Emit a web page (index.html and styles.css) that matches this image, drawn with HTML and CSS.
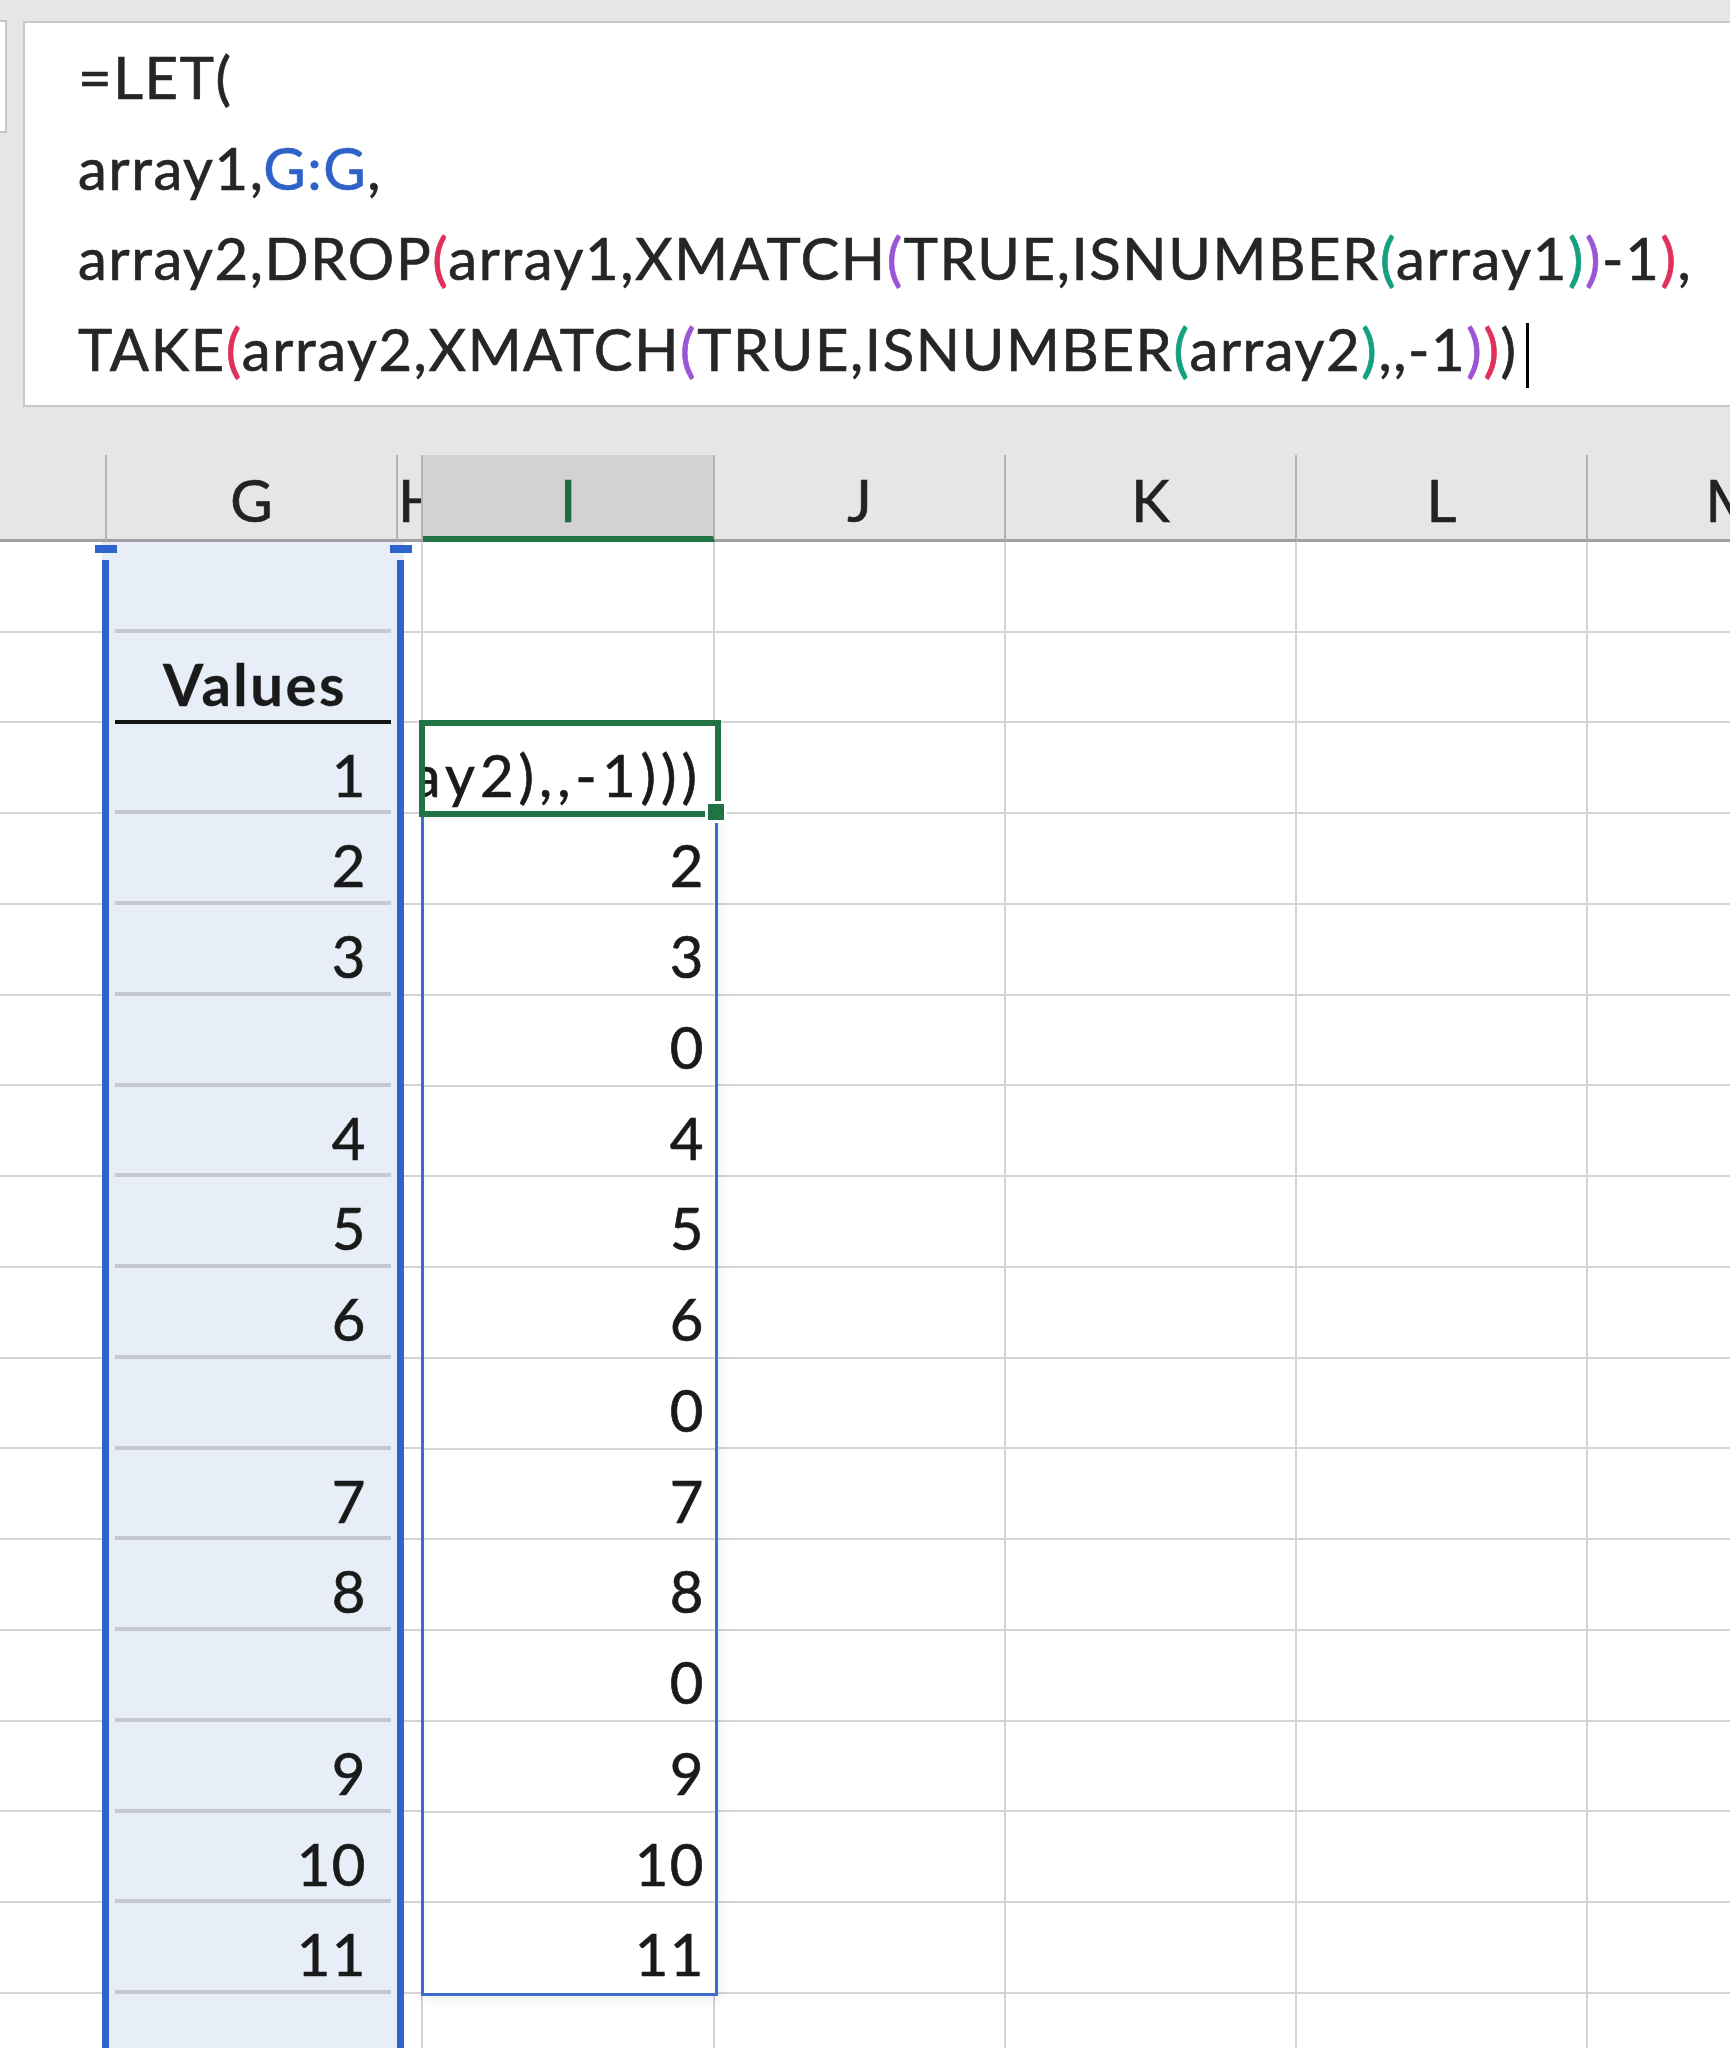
FILE: index.html
```html
<!DOCTYPE html>
<html lang="en">
<head>
<meta charset="utf-8">
<title>Excel LET formula</title>
<link rel="stylesheet" href="styles.css">
</head>
<body>
<div class="formula-row">
  <div class="namebox"></div>
  <div class="fbar">
    <div class="fline">=LET(</div>
    <div class="fline">array1,<span class="ref">G:G</span>,</div>
    <div class="fline">array2,DROP<span class="p2">(</span>array1,XMATCH<span class="p3">(</span>TRUE,ISNUMBER<span class="p4">(</span>array1<span class="p4">)</span><span class="p3">)</span>-1<span class="p2">)</span>,</div>
    <div class="fline">TAKE<span class="p2">(</span>array2,XMATCH<span class="p3">(</span>TRUE,ISNUMBER<span class="p4">(</span>array2<span class="p4">)</span>,,-1<span class="p3">)</span><span class="p2">)</span>)<span class="caret"></span></div>
  </div>
</div>

<div class="col-headers">
  <div class="ch w-f"></div>
  <div class="ch w-g">G</div>
  <div class="ch w-h">H</div>
  <div class="ch w-i sel">I</div>
  <div class="ch w-std">J</div>
  <div class="ch w-std">K</div>
  <div class="ch w-std">L</div>
  <div class="ch w-std">M</div>
</div>

<div class="grid">
  <div class="col plain col-f"></div>

  <div class="col col-g">
    <span class="handle hl"></span>
    <span class="handle hr"></span>
    <div class="gcell"></div>
    <div class="gcell head">Values</div>
    <div class="gcell">1</div>
    <div class="gcell">2</div>
    <div class="gcell">3</div>
    <div class="gcell"></div>
    <div class="gcell">4</div>
    <div class="gcell">5</div>
    <div class="gcell">6</div>
    <div class="gcell"></div>
    <div class="gcell">7</div>
    <div class="gcell">8</div>
    <div class="gcell"></div>
    <div class="gcell">9</div>
    <div class="gcell">10</div>
    <div class="gcell">11</div>
    <div class="gcell"></div>
  </div>

  <div class="col plain col-h"></div>

  <div class="col col-i">
    <div class="icell"></div>
    <div class="icell"></div>
    <div class="spill">
      <div class="icell active">
        <div class="active-text"><span>ISNUMBER(array2),,-1)))</span></div>
        <span class="active-frame"></span>
        <span class="fill-handle"></span>
      </div>
      <div class="icell">2</div>
      <div class="icell">3</div>
      <div class="icell">0</div>
      <div class="icell">4</div>
      <div class="icell">5</div>
      <div class="icell">6</div>
      <div class="icell">0</div>
      <div class="icell">7</div>
      <div class="icell">8</div>
      <div class="icell">0</div>
      <div class="icell">9</div>
      <div class="icell">10</div>
      <div class="icell">11</div>
    </div>
    <div class="icell"></div>
  </div>

  <div class="col plain col-std"></div>
  <div class="col plain col-std"></div>
  <div class="col plain col-std"></div>
  <div class="col plain col-std"></div>
</div>
</body>
</html>
```

FILE: styles.css
```css
* {
  box-sizing: border-box;
}

html,
body {
  margin: 0;
  padding: 0;
}

body {
  width: 1730px;
  height: 2048px;
  overflow: hidden;
  background: #e6e6e6;
  font-family: Lato, "Open Sans", sans-serif;
  color: #262626;
  -webkit-text-stroke: 0.7px currentColor;
}

/* ---------- formula bar ---------- */
.formula-row {
  display: flex;
  align-items: flex-start;
  padding-top: 20px;
  height: 455px;
}

.namebox {
  flex: none;
  width: 7px;
  height: 113px;
  background: #fff;
  border: 2px solid #c6c6c6;
  border-left: 0;
}

.fbar {
  flex: none;
  width: 1740px;
  margin-left: 16px;
  margin-top: 1px;
  background: #fff;
  border: 2px solid #c8c8c8;
  border-right: 0;
  padding: 9px 0 10px 53px;
  font-size: 58px;
  letter-spacing: 1.6px;
  line-height: 90.67px;
  white-space: nowrap;
  color: #262626;
}

.ref { color: #2f62c8; }
.p2 { color: #e0305c; }
.p3 { color: #9b55d6; }
.p4 { color: #15a07e; }

.caret {
  display: inline-block;
  width: 3px;
  height: 65px;
  margin-left: 8px;
  background: #000;
  vertical-align: -17px;
}

/* ---------- column headers ---------- */
.col-headers {
  display: flex;
  height: 87px;
}

.ch {
  flex: none;
  height: 87px;
  border-right: 2px solid #b3b3b3;
  border-bottom: 3px solid #a0a0a0;
  padding-top: 4px;
  text-align: center;
  font-size: 58px;
  line-height: 81px;
  color: #222;
  overflow: hidden;
  white-space: nowrap;
}

.ch.sel {
  background: #d2d2d2;
  border-bottom: 6px solid #217346;
  color: #1d6b3c;
}

.w-f { width: 107px; }
.w-g { width: 291px; }
.w-h { width: 25px; }
.w-i { width: 292px; }
.w-std { width: 291px; }

/* ---------- grid ---------- */
.grid {
  display: flex;
  height: 1506px;
  overflow: hidden;
  font-size: 58px;
  letter-spacing: 1.5px;
  color: #1a1a1a;
}

.col {
  flex: none;
  height: 100%;
}

.plain {
  background: repeating-linear-gradient(#fff 0 88.75px, #d4d4d4 88.75px 90.75px);
  border-right: 2px solid #d4d4d4;
}

.col-f {
  width: 102px;
  border-right: 0;
}

.col-h {
  width: 19px;
}

.col-std {
  width: 291px;
}

/* referenced column G */
.col-g {
  width: 302px;
  position: relative;
  background: #e8eef8;
  padding: 0 13px;
}

.col-g::before,
.col-g::after {
  content: "";
  position: absolute;
  top: 18px;
  bottom: 0;
  width: 7px;
  background: #2e64cc;
  z-index: 2;
}

.col-g::before { left: 0; }
.col-g::after { right: 0; }

.handle {
  position: absolute;
  top: 3px;
  width: 22px;
  height: 8px;
  background: #2e64cc;
  z-index: 3;
}

.hl { left: -7px; }
.hr { right: -8px; }

.gcell {
  height: 90.75px;
  border-bottom: 4px solid #c3c8d1;
  padding: 12px 24px 0 0;
  line-height: 78px;
  text-align: right;
}

.gcell.head {
  font-weight: 700;
  text-align: center;
  padding-right: 0;
  padding-left: 4px;
  letter-spacing: 2.5px;
  border-bottom-color: #141414;
  -webkit-text-stroke: 0.3px currentColor;
}

/* result column I */
.col-i {
  width: 292px;
  background: #fff;
  border-right: 2px solid #d4d4d4;
}

.icell {
  height: 90.75px;
  border-bottom: 2px solid #d4d4d4;
  padding: 12px 11px 0 0;
  line-height: 78px;
  text-align: right;
}

.spill {
  position: relative;
  z-index: 1;
  margin-right: -3px;
  background: #fff;
  outline: 3px solid #3b6cd0;
  outline-offset: -1px;
  box-shadow: 4px 6px 10px rgba(0, 0, 0, 0.08);
}

.spill .icell:last-child {
  border-bottom-color: transparent;
}

.active {
  position: relative;
}

.active-text {
  display: flex;
  justify-content: flex-end;
  overflow: hidden;
  white-space: nowrap;
  padding-right: 3px;
  letter-spacing: 5px;
}

.active-text span {
  flex: none;
}

.active-frame {
  position: absolute;
  top: -4px;
  left: -4px;
  right: -5px;
  bottom: -5px;
  border: 6px solid #217346;
  z-index: 2;
}

.fill-handle {
  position: absolute;
  right: -11px;
  bottom: -11px;
  width: 22px;
  height: 22px;
  background: #217346;
  border: 3px solid #fff;
  z-index: 3;
}
```
